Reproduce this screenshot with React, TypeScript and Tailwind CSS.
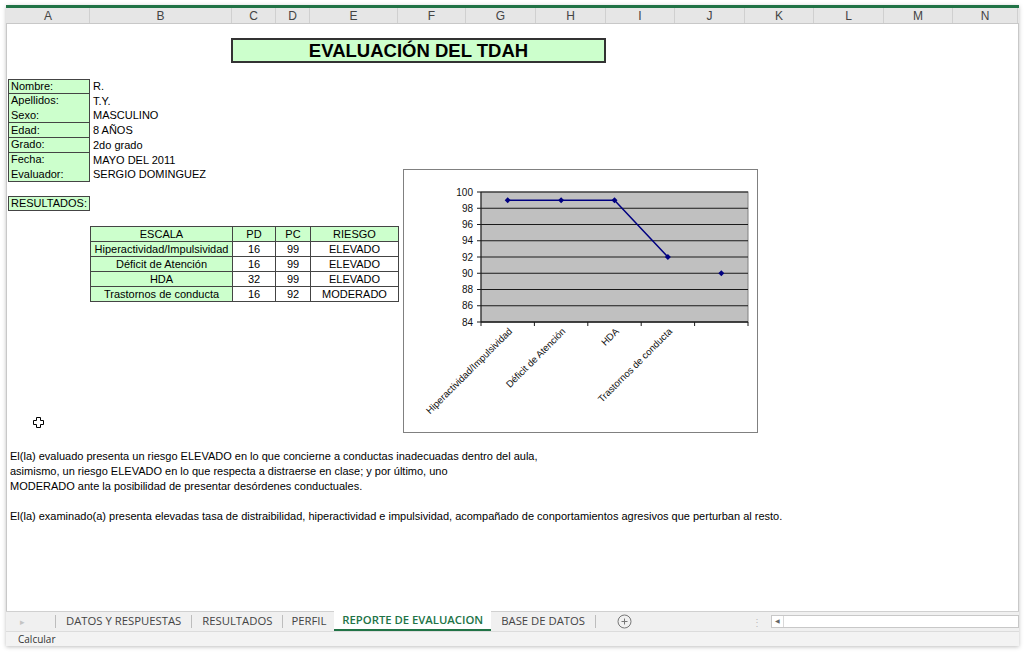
import React from "react";

const cols: [string, number][] = [
  ["A", 83],
  ["B", 142],
  ["C", 44],
  ["D", 34],
  ["E", 88],
  ["F", 68],
  ["G", 70],
  ["H", 70],
  ["I", 69],
  ["J", 70],
  ["K", 69],
  ["L", 70],
  ["M", 69],
  ["N", 65],
];

const info: [string, string][] = [
  ["Nombre:", "R."],
  ["Apellidos:", "T.Y."],
  ["Sexo:", "MASCULINO"],
  ["Edad:", "8 AÑOS"],
  ["Grado:", "2do grado"],
  ["Fecha:", "MAYO DEL 2011"],
  ["Evaluador:", "SERGIO DOMINGUEZ"],
];

const rows = [
  { escala: "Hiperactividad/Impulsividad", pd: 16, pc: 99, riesgo: "ELEVADO" },
  { escala: "Déficit de Atención", pd: 16, pc: 99, riesgo: "ELEVADO" },
  { escala: "HDA", pd: 32, pc: 99, riesgo: "ELEVADO" },
  { escala: "Trastornos de conducta", pd: 16, pc: 92, riesgo: "MODERADO" },
];

const arial = { fontFamily: '"Liberation Sans", Arial, sans-serif' };

function Chart() {
  const left = 77;
  const right = 344;
  const top = 22;
  const bottom = 152;
  const step = (right - left) / 5;
  const yOf = (v: number) => top + (100 - v) * 8.125;
  const xOf = (i: number) => left + step * (i + 0.5);
  const values = [99, 99, 99, 92, 90];
  const labels = ["Hiperactividad/Impulsividad", "Déficit de Atención", "HDA", "Trastornos de conducta", ""];
  const ticks = [100, 98, 96, 94, 92, 90, 88, 86, 84];
  const line = values
    .slice(0, 4)
    .map((v, i) => `${i === 0 ? "M" : "L"}${xOf(i)} ${yOf(v)}`)
    .join(" ");

  return (
    <svg width="355" height="264" viewBox="0 0 355 264" className="block">
      <rect x={left} y={top} width={right - left} height={bottom - top} fill="#c0c0c0" stroke="#808080" />
      {ticks.map((t) => (
        <g key={t}>
          <line x1={left} x2={right} y1={yOf(t)} y2={yOf(t)} stroke="#1a1a1a" strokeWidth="1" />
          <line x1={left - 4} x2={left} y1={yOf(t)} y2={yOf(t)} stroke="#1a1a1a" />
          <text
            x={left - 8}
            y={yOf(t) + 3.5}
            textAnchor="end"
            fontSize="10"
            fill="#111"
            fontFamily='"Liberation Sans", Arial, sans-serif'
          >
            {t}
          </text>
        </g>
      ))}
      <line x1={left} x2={left} y1={top} y2={bottom} stroke="#1a1a1a" />
      <line x1={left} x2={right} y1={bottom} y2={bottom} stroke="#1a1a1a" />
      {[0, 1, 2, 3, 4, 5].map((i) => (
        <line key={i} x1={left + step * i} x2={left + step * i} y1={bottom} y2={bottom + 4} stroke="#1a1a1a" />
      ))}
      <path d={line} fill="none" stroke="#000080" strokeWidth="1.5" />
      {values.map((v, i) => (
        <path
          key={i}
          d={`M${xOf(i)} ${yOf(v) - 3} L${xOf(i) + 3} ${yOf(v)} L${xOf(i)} ${yOf(v) + 3} L${xOf(i) - 3} ${yOf(v)} Z`}
          fill="#000080"
        />
      ))}
      {labels.map((l, i) => (
        <text
          key={i}
          transform={`translate(${xOf(i) + 5} ${bottom + 10}) rotate(-45)`}
          textAnchor="end"
          fontSize="9.6"
          fill="#111"
          fontFamily='"Liberation Sans", Arial, sans-serif'
        >
          {l}
        </text>
      ))}
    </svg>
  );
}

export default function App() {
  return (
    <div className="w-[1024px] h-[652px] bg-white pt-[5px] pl-[6px] overflow-hidden">
      <div className="w-[1013px] h-[641px] flex flex-col bg-white shadow-[0_1px_4px_rgba(0,0,0,0.25)]">
        <div className="h-[3px] bg-[#217346]" />

        {/* column headers */}
        <div className="h-[16px] flex bg-[#e6e6e6] border-b border-[#c8c8c8] pl-[1px] text-[12px] text-[#444]" style={arial}>
          {cols.map(([c, w]) => (
            <div key={c} style={{ width: w }} className="shrink-0 flex items-center justify-center border-r border-[#d0d0d0] leading-none">
              {c}
            </div>
          ))}
        </div>

        {/* sheet */}
        <div className="relative h-[587px] border-l border-[#c8c8c8] border-r text-[11px] text-black" style={arial}>
          <div className="pt-[14px]">
            <div className="ml-[224px] w-[375px] h-[25px] bg-[#ccffcc] border-2 border-[#333] flex items-center justify-center font-bold text-[18.5px]">
              EVALUACIÓN DEL TDAH
            </div>

            <div className="mt-[16px] ml-[1px]">
              {info.map(([k, v], i) => (
                <div key={k} className={`flex h-[15px] items-center leading-none ${i > 0 ? "-mt-[0.3px]" : ""}`}>
                  <div className={`w-[82px] h-full bg-[#ccffcc] border-x border-b border-[#444] pl-[2px] flex items-center ${i === 0 ? "border-t" : ""}`}>{k}</div>
                  <div className="pl-[3px]">{v}</div>
                </div>
              ))}
            </div>

            <div className="mt-[14px] ml-[1px] w-[82px] h-[15px] bg-[#ccffcc] border border-[#444] pl-[2px] flex items-center leading-none">
              RESULTADOS:
            </div>

            <table className="mt-[15px] ml-[83px] border-collapse leading-none table-fixed">
              <thead>
                <tr className="h-[15px] bg-[#ccffcc]">
                  <th className="w-[142px] font-normal border border-[#444] p-0">ESCALA</th>
                  <th className="w-[43px] font-normal border border-[#444] p-0">PD</th>
                  <th className="w-[35px] font-normal border border-[#444] p-0">PC</th>
                  <th className="w-[88px] font-normal border border-[#444] p-0">RIESGO</th>
                </tr>
              </thead>
              <tbody>
                {rows.map((r) => (
                  <tr key={r.escala} className="h-[15px] text-center">
                    <td className="bg-[#ccffcc] border border-[#444] p-0 whitespace-nowrap">{r.escala}</td>
                    <td className="border border-[#444] p-0">{r.pd}</td>
                    <td className="border border-[#444] p-0">{r.pc}</td>
                    <td className="border border-[#444] p-0">{r.riesgo}</td>
                  </tr>
                ))}
              </tbody>
            </table>

            <div className="mt-[147px] pl-[3px] leading-[15px]">
              <p>El(la) evaluado presenta un riesgo ELEVADO en lo que concierne a conductas inadecuadas dentro del aula,</p>
              <p>asimismo, un riesgo ELEVADO en lo que respecta a distraerse en clase; y por último, uno</p>
              <p>MODERADO ante la posibilidad de presentar desórdenes conductuales.</p>
              <p className="mt-[15px]">
                El(la) examinado(a) presenta elevadas tasa de distraibilidad, hiperactividad e impulsividad, acompañado de conportamientos agresivos que perturban al resto.
              </p>
            </div>
          </div>

          {/* floating chart object */}
          <div className="absolute left-[396px] top-[145px] w-[355px] h-[264px] border border-[#808080] bg-white">
            <Chart />
          </div>

          {/* cell cursor */}
          <svg className="absolute left-[26px] top-[393px]" width="11" height="11" viewBox="0 0 11 11">
            <path d="M3.5 0.5h4v3h3v4h-3v3h-4v-3h-3v-4h3z" fill="#fff" stroke="#000" strokeWidth="1" />
          </svg>
        </div>

        {/* sheet tabs */}
        <div
          className="h-[20px] flex items-stretch bg-[#f0f0f0] border-t border-[#d0d0d0] text-[11.3px] text-[#444]"
          style={{ fontFamily: '"Open Sans", "Noto Sans", sans-serif' }}
        >
          <div className="w-[49px] flex items-center pl-[14px] text-[#c4c4c4] text-[9px]">▸</div>
          <div className="w-px my-[3px] bg-[#bdbdbd]" />
          <div className="px-[10px] flex items-center">DATOS Y RESPUESTAS</div>
          <div className="w-px my-[3px] bg-[#bdbdbd]" />
          <div className="px-[10px] flex items-center">RESULTADOS</div>
          <div className="w-px my-[3px] bg-[#bdbdbd]" />
          <div className="px-[8px] flex items-center">PERFIL</div>
          <div className="px-[8px] flex items-center bg-white border-b-2 border-[#217346] font-semibold text-[#217346] -mt-px">
            REPORTE DE EVALUACION
          </div>
          <div className="px-[10px] flex items-center">BASE DE DATOS</div>
          <div className="w-px my-[3px] bg-[#bdbdbd]" />
          <div className="ml-[21px] flex items-center">
            <svg width="15" height="15" viewBox="0 0 15 15">
              <circle cx="7.5" cy="7.5" r="6.5" fill="none" stroke="#777" />
              <path d="M7.5 4.5v6M4.5 7.5h6" stroke="#777" />
            </svg>
          </div>
          <div className="flex-1" />
          <div className="flex items-center text-[#bbb] text-[10px] leading-none">⋮</div>
          <div className="ml-[9px] w-[248px] my-[3px] bg-white border border-[#c8c8c8] flex">
            <div className="w-[12px] border-r border-[#d8d8d8] flex items-center justify-center text-[6px] text-[#666]">◀</div>
          </div>
        </div>

        {/* status bar */}
        <div
          className="h-[15px] flex items-center pl-[12px] bg-[#f3f3f3] border-t border-[#dcdcdc] text-[10px] text-[#333]"
          style={{ fontFamily: '"Open Sans", "Noto Sans", sans-serif' }}
        >
          Calcular
        </div>
      </div>
    </div>
  );
}
